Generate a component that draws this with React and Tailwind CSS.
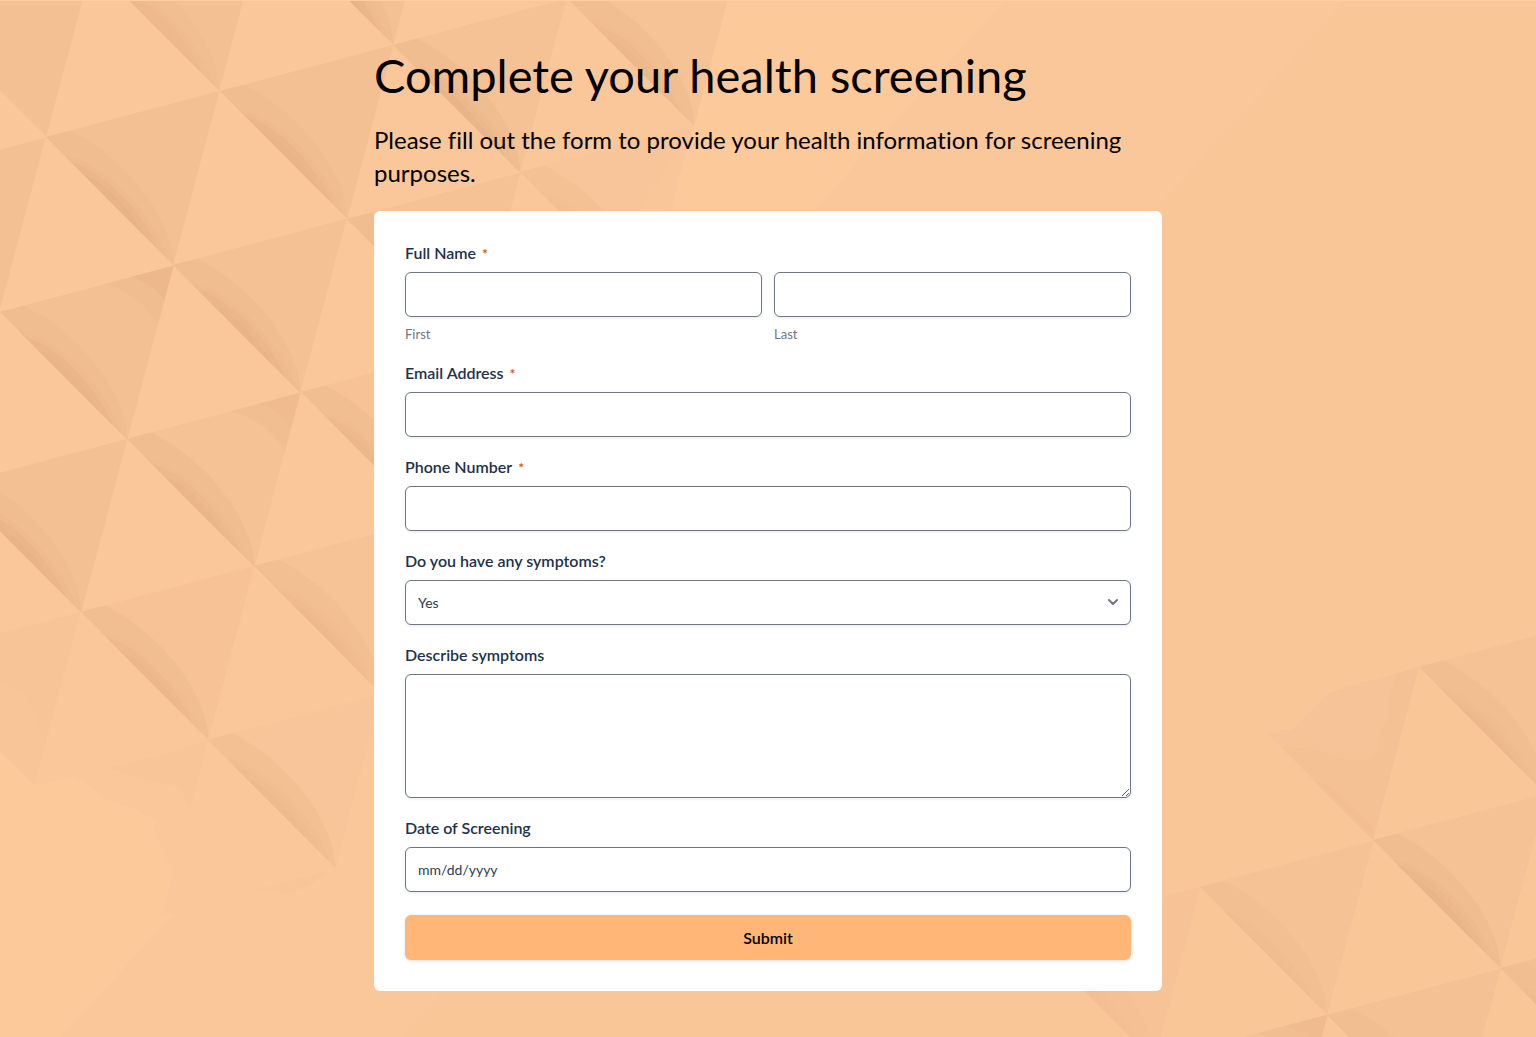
import React from "react";

// each facet is the triangle (x, y), (x + 173, y - 46), (x + 127, y + 127)
const facets = [
  { x: -81, y: 9, shade: 1, crescent: 0 },
  { x: 92, y: -37, shade: 1, crescent: 0.6 },
  { x: 266, y: -83, shade: 0.9, crescent: 1 },
  { x: -128, y: 184, shade: 1, crescent: 0.7 },
  { x: 46, y: 137, shade: 1, crescent: 1 },
  { x: 220, y: 91, shade: 1, crescent: 0.9 },
  { x: 393, y: 45, shade: 0.8, crescent: 0.9 },
  { x: 567, y: -2, shade: 0.6, crescent: 0.7 },
  { x: 0, y: 312, shade: 1, crescent: 0.9, corner: 1 },
  { x: 173, y: 265, shade: 0.9, crescent: 0.9 },
  { x: 347, y: 219, shade: 0.8, crescent: 0.8 },
  { x: 520, y: 172, shade: 0.3, crescent: 0.4 },
  { x: -46, y: 485, shade: 1, crescent: 0.9 },
  { x: 127, y: 439, shade: 0.8, crescent: 0.8, corner: 0.6 },
  { x: 301, y: 392, shade: 0.7, crescent: 0.7 },
  { x: -93, y: 658, shade: 0.4, crescent: 0 },
  { x: 81, y: 612, shade: 0.7, crescent: 0.7 },
  { x: 254, y: 566, shade: 0.6, crescent: 0.6 },
  { x: 208, y: 740, shade: 0.3, crescent: 0.6 },
  { x: 1419, y: 667, shade: 0.7, crescent: 0.6 },
  { x: 1373, y: 840, shade: 0.8, crescent: 0.9 },
  { x: 1546, y: 794, shade: 0.8, crescent: 0.8 },
  { x: 1200, y: 887, shade: 0.7, crescent: 0.4 },
  { x: 1027, y: 933, shade: 0.6, crescent: 0.2 },
  { x: 1327, y: 1015, shade: 0.9, crescent: 0.5 },
  { x: 1500, y: 968, shade: 1, crescent: 0.6 },
  { x: 1154, y: 1061, shade: 0.9, crescent: 0, corner: 0.6 },
];

const Backdrop = () => (
  <svg
    aria-hidden="true"
    viewBox="0 0 1536 1037"
    preserveAspectRatio="xMidYMid slice"
    className="absolute inset-0 -z-10 h-full w-full"
  >
    <rect width="1536" height="1037" fill="#fac79b" />
    <path d="M728 0H1005L814 210H640L694 126Z" fill="#fcc99b" />
    <path d="M1345 0H1536V1037H401Z" fill="#f9c698" />
    <path
      d="M0 683L22 693L32 710L45 740L35 785L75 777L103 795V798L135 809L155 820V833L173 872L162 914L173 915L61 1037H0Z"
      fill="#fcc99b"
    />
    {facets.map(({ x, y, shade, crescent, corner }) => (
      <g key={`${x}-${y}`} transform={`matrix(173.5 -46.3 127.3 127.5 ${x} ${y})`}>
        <path d="M0 0H1L0 1Z" fill="#f3c094" opacity={shade} />
        <g opacity={crescent}>
          <path d="M0 0H.14C.27 .28 .2 .72 0 1Z" fill="#f0bd90" />
          <path d="M0 .15C.14 .23 .15 .62 0 .96Z" fill="#eeba8e" />
          <path d="M0 .2C.1 .28 .11 .6 0 .88Z" fill="#ebb78a" />
          <path d="M0 .3C.06 .38 .06 .56 0 .78Z" fill="#e8b387" />
        </g>
        {corner && (
          <g opacity={corner}>
            <path d="M1 0H.6C.68 .08 .7 .18 .66 .34Z" fill="#f0bd90" />
            <path d="M1 0H.76C.8 .06 .82 .12 .8 .2Z" fill="#ecb88c" />
          </g>
        )}
      </g>
    ))}
    {/* half faded facets */}
    <path d="M1268 735L1292 729L1328 693L1419 667L1373 840Z" fill="#f6c398" />
    <path
      d="M1419 667L1397 673L1388 700V718L1378 738L1378 752L1368 760L1347 761L1318 750L1281 746L1373 840Z"
      fill="#f4c194"
    />
    <path d="M1312 779L1331 787L1374 828L1373 840Z" fill="#f2be92" />
    <path d="M110 768L180 749L208 740L190 810L180 787L135 778Z" fill="#f8c598" />
    <path d="M255 890L328 871L310 885L290 894Z" fill="#f8c597" />
    <path d="M0 .5H1536" stroke="#fdcda3" />
  </svg>
);

const labelClass = "block text-base leading-[22px] font-semibold text-[#22324a]";
const fieldClass =
  "block w-full rounded-md border border-[#6f7684] bg-white px-3 text-sm text-[#2c3e50] shadow-[0_1px_3px_rgba(50,50,93,0.1)]";
const hintClass = "mt-2 block text-[13px] leading-[18px] text-[#6f7684]";

const Asterisk = () => <span className="ml-1.5 text-sm font-bold text-[#c9622f]">*</span>;

const Field = ({ id, label, required, children }) => (
  <div className="flex flex-col gap-2">
    <label htmlFor={id} className={labelClass}>
      {label}
      {required && <Asterisk />}
    </label>
    {children}
  </div>
);

const App = () => {
  return (
    <main className="relative isolate min-h-screen overflow-hidden px-4 py-[46px] font-['Lato',sans-serif] text-black [font-variant-ligatures:no-common-ligatures]">
      <Backdrop />
      <div className="mx-auto max-w-[788px]">
        <h1 className="text-[47px] leading-[58px]">Complete your health screening</h1>
        <p className="mt-[19px] mb-[22px] text-2xl leading-[33px]">
          Please fill out the form to provide your health information for screening purposes.
        </p>

        <form
          className="flex flex-col gap-[19px] rounded-md bg-white p-[31px]"
          onSubmit={(e) => e.preventDefault()}
        >
          <fieldset>
            <legend className={`${labelClass} mb-2`}>
              Full Name
              <Asterisk />
            </legend>
            <div className="grid grid-cols-2 gap-3">
              <div>
                <input id="first" type="text" className={`${fieldClass} h-[45px]`} />
                <label htmlFor="first" className={hintClass}>
                  First
                </label>
              </div>
              <div>
                <input id="last" type="text" className={`${fieldClass} h-[45px]`} />
                <label htmlFor="last" className={hintClass}>
                  Last
                </label>
              </div>
            </div>
          </fieldset>

          <Field id="email" label="Email Address" required>
            <input id="email" type="email" className={`${fieldClass} h-[45px]`} />
          </Field>

          <Field id="phone" label="Phone Number" required>
            <input id="phone" type="tel" className={`${fieldClass} h-[45px]`} />
          </Field>

          <Field id="symptoms" label="Do you have any symptoms?">
            <div className="relative">
              <select id="symptoms" className={`${fieldClass} h-[45px] appearance-none`}>
                <option>Yes</option>
                <option>No</option>
              </select>
              <svg
                viewBox="0 0 12 8"
                className="pointer-events-none absolute top-[18px] right-3 h-2 w-3"
                fill="none"
                stroke="#6f7684"
                strokeWidth="2"
                strokeLinecap="round"
                strokeLinejoin="round"
              >
                <path d="M2 2L6 6L10 2" />
              </svg>
            </div>
          </Field>

          <Field id="describe" label="Describe symptoms">
            <textarea id="describe" className={`${fieldClass} h-[124px] resize py-3`} />
          </Field>

          <Field id="date" label="Date of Screening">
            <input
              id="date"
              type="text"
              placeholder="mm/dd/yyyy"
              className={`${fieldClass} h-[45px] placeholder:text-[#2c3e50]`}
            />
          </Field>

          <button
            type="submit"
            className="mt-1 h-[45px] rounded-md bg-[#ffb676] text-base font-semibold shadow-[0_1px_3px_rgba(50,50,93,0.15)]"
          >
            Submit
          </button>
        </form>
      </div>
    </main>
  );
};

export default App;
